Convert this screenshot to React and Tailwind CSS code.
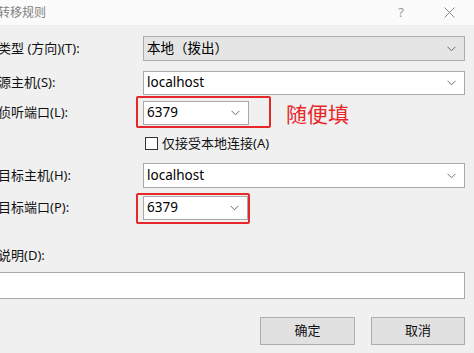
import React from 'react';

const font = { fontFamily: '"Segoe UI", "Noto Sans", "Noto Sans CJK SC", sans-serif' };

function Chevron() {
  return (
    <svg width="9" height="6" viewBox="0 0 9 6" fill="none" className="shrink-0">
      <path d="M0.5 0.8L4.5 4.8L8.5 0.8" stroke="#6b6b6b" strokeWidth="1" />
    </svg>
  );
}

function Combo({ value, grey, className }) {
  return (
    <div
      className={
        'flex items-center justify-between pl-[3px] pr-[8px] border text-[13.5px] text-black ' +
        (grey ? 'bg-[#e5e5e5] border-[#adadad] ' : 'bg-white border-[#a9a9a9] ') +
        className
      }
    >
      <span className="leading-none">{value}</span>
      <Chevron />
    </div>
  );
}

function Row({ label, children, className }) {
  return (
    <div className={'flex items-center ' + className}>
      <span className="w-[145px] shrink-0 -ml-[2px] text-[13px] text-[#111] whitespace-nowrap">{label}</span>
      {children}
    </div>
  );
}

export default function App() {
  return (
    <div className="w-[474px] h-[353px] overflow-hidden bg-[#f0f0f0] flex flex-col" style={font}>
      {/* title bar */}
      <div className="h-[25px] shrink-0 bg-[#fbfbfb] flex items-center justify-between">
        <span className="-ml-[2px] text-[12px] text-[#808080]">转移规则</span>
        <div className="flex items-center gap-[40px] pr-[19px] text-[#9a9a9a]">
          <span className="text-[13px] leading-none">?</span>
          <svg width="11" height="11" viewBox="0 0 11 11">
            <path d="M0.5 0.5L10.5 10.5M10.5 0.5L0.5 10.5" stroke="#8a8a8a" strokeWidth="1" />
          </svg>
        </div>
      </div>

      <div className="flex flex-col pr-[9px]">
        <Row label="类型 (方向)(T):" className="mt-[11px] h-[25px]">
          <Combo grey value="本地（拨出）" className="flex-1 h-[25px]" />
        </Row>

        <Row label="源主机(S):" className="mt-[10px] h-[24px]">
          <Combo value="localhost" className="flex-1 h-[24px]" />
        </Row>

        <Row label="侦听端口(L):" className="mt-[6px] h-[24px]">
          <div className="relative">
            <Combo value="6379" className="w-[106px] h-[24px]" />
            <div className="absolute -left-[7px] -top-[5px] w-[135px] h-[32px] border-2 border-[#e8272a] rounded-[2px]" />
          </div>
          <span
            className="ml-[37px] text-[21px] leading-none text-[#e8272a]"
            style={{ fontFamily: '"Noto Sans CJK SC", sans-serif' }}
          >
            随便填
          </span>
        </Row>

        <div className="mt-[12px] h-[13px] pl-[145px] flex items-center gap-[4px]">
          <div className="w-[13px] h-[13px] bg-white border border-[#333]" />
          <span className="text-[13px] text-[#111] leading-none">仅接受本地连接(A)</span>
        </div>

        <Row label="目标主机(H):" className="mt-[13px] h-[25px]">
          <Combo value="localhost" className="flex-1 h-[25px]" />
        </Row>

        <Row label="目标端口(P):" className="mt-[8px] h-[24px]">
          <div className="relative">
            <Combo value="6379" className="w-[105px] h-[24px]" />
            <div className="absolute -left-[7px] -top-[3px] w-[114px] h-[31px] border-2 border-[#e8272a] rounded-[2px]" />
          </div>
        </Row>

        <span className="mt-[27px] -ml-[2px] h-[16px] text-[13px] text-[#111] leading-[16px]">说明(D):</span>

        <div className="mt-[9px] h-[27px] bg-white border border-[#a9a9a9] -ml-[1px]" />

        <div className="mt-[18px] flex justify-end gap-[16px]">
          <button className="w-[95px] h-[28px] bg-[#e1e1e1] border border-[#adadad] text-[13px] text-[#111]">确定</button>
          <button className="w-[94px] h-[28px] bg-[#e1e1e1] border border-[#adadad] text-[13px] text-[#111]">取消</button>
        </div>
      </div>
    </div>
  );
}
